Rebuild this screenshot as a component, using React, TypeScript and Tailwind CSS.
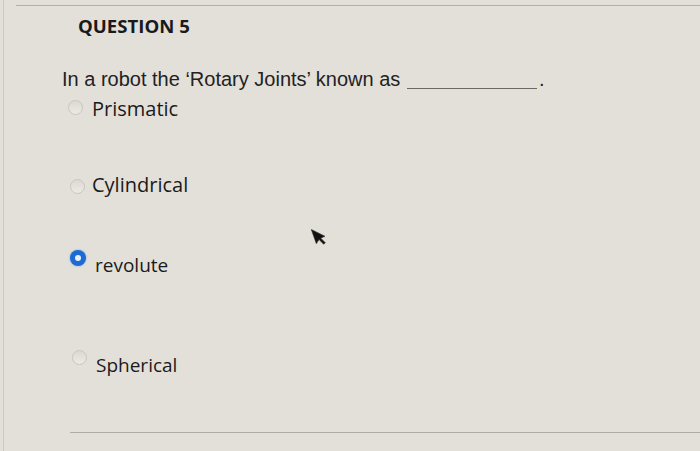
const options = [
  { label: "Prismatic", mt: "mt-[4px]", pl: "pl-[6px]", gap: "gap-[9px]", radioMt: "mt-[5px]", size: "text-[20px]", checked: false },
  { label: "Cylindrical", mt: "mt-[48px]", pl: "pl-[8px]", gap: "gap-[7px]", radioMt: "mt-[8px]", size: "text-[20px]", checked: false },
  { label: "revolute", mt: "mt-[52px]", pl: "pl-[8px]", gap: "gap-[9px]", radioMt: "mt-[-1px]", size: "text-[19px]", checked: true },
  { label: "Spherical", mt: "mt-[72px]", pl: "pl-[10px]", gap: "gap-[9px]", radioMt: "mt-[-1px]", size: "text-[19px]", checked: false },
];

export default function App() {
  return (
    <div className="relative w-[700px] h-[451px] overflow-hidden bg-[#e3e0da] flex">
      {/* left edge */}
      <div className="w-[3px] shrink-0" />
      <div className="w-px shrink-0 bg-[#cdcac4]" />

      <div className="flex-1 pl-[12px]">
        <div className="mt-[5px] border-t border-[#b3b0aa] pl-[46px]">
          {/* HEADER */}
          <h1
            className="mt-[8px] ml-[16px] text-[18.6px] leading-[24px] font-bold text-[#1a1a1a]"
            style={{ fontFamily: '"Open Sans", sans-serif' }}
          >
            QUESTION 5
          </h1>

          {/* QUESTION */}
          <p
            className="mt-[29px] text-[20px] leading-[24px] text-[#222]"
            style={{ fontFamily: '"Liberation Sans", Arial, sans-serif' }}
          >
            In a robot the ‘Rotary Joints’ known as{" "}
            <span className="inline-block w-[130px] h-px bg-[#6a6864] align-[-3px] ml-[1px]" />
            <span className="ml-[2px]">.</span>
          </p>

          {/* OPTIONS */}
          <div style={{ fontFamily: '"Open Sans", sans-serif' }}>
            {options.map((o) => (
              <div key={o.label} className={`flex items-start ${o.mt} ${o.pl} ${o.gap}`}>
                <Radio checked={o.checked} className={o.radioMt} />
                <span className={`${o.size} leading-[28px] text-[#1a1a1a]`}>{o.label}</span>
              </div>
            ))}
          </div>

          {/* FOOTER LINE */}
          <div className="mt-[53px] ml-[8px] border-t border-[#b0ada7]" />
        </div>
      </div>

      {/* mouse pointer */}
      <svg
        className="absolute left-[311px] top-[227px]"
        width="16"
        height="20"
        viewBox="0 0 16 20"
      >
        <path
          d="M2 1 L4 16 L7.5 12.5 L11 18 L13 17 L9.5 11.5 L14 10.5 Z"
          fill="#111"
          stroke="#3a3a3a"
          strokeWidth="0.6"
          transform="rotate(-12 8 10)"
        />
      </svg>
    </div>
  );
}

function Radio({ checked, className }: { checked: boolean; className: string }) {
  if (checked) {
    return (
      <div
        className={`w-[16px] h-[16px] shrink-0 rounded-full bg-[#1d6ad4] flex items-center justify-center shadow-[0_0_2px_rgba(29,106,212,0.6)] ${className}`}
      >
        <div className="w-[6px] h-[6px] rounded-full bg-[#e9eef6]" />
      </div>
    );
  }
  return (
    <div
      className={`w-[15px] h-[15px] shrink-0 rounded-full border border-[#c9c6c0] bg-gradient-to-b from-[#dcd9d3] to-[#eceae5] ${className}`}
    />
  );
}
